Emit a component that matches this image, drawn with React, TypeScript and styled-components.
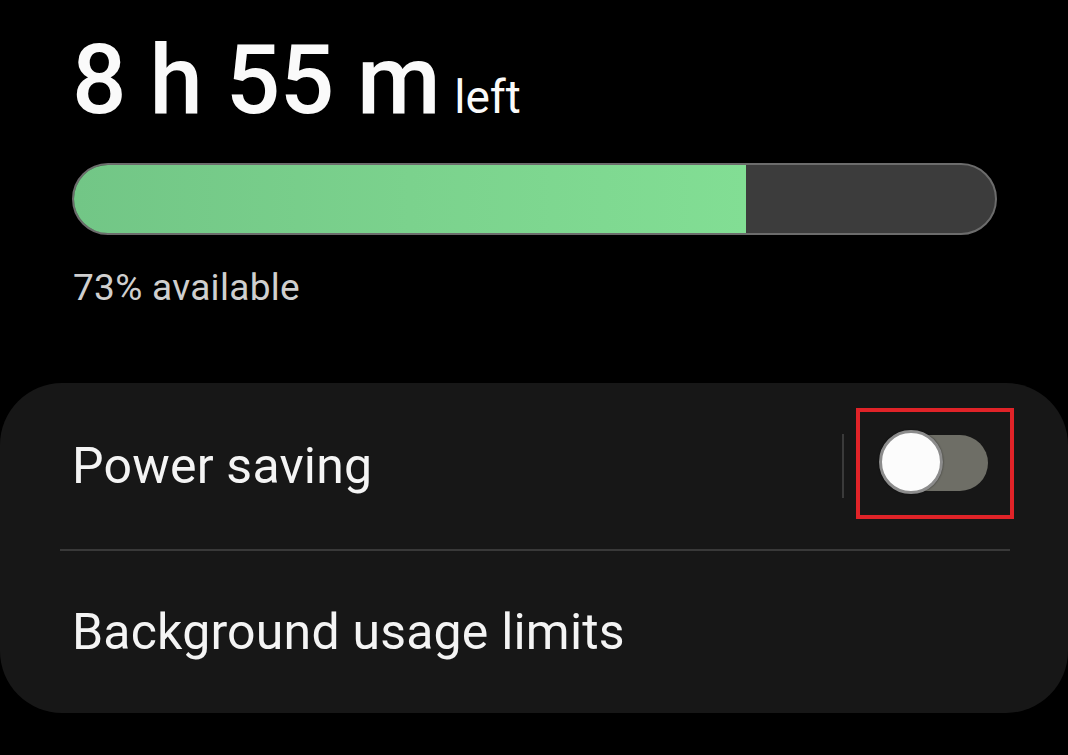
import React from "react";
import styled, { createGlobalStyle } from "styled-components";

const Global = createGlobalStyle`
  html, body { margin: 0; padding: 0; background: #000; }
  body { font-family: Roboto, "Noto Sans", sans-serif; color: #fff; overflow: hidden; }
`;

const Page = styled.div`
  width: 1068px;
  height: 755px;
  background: #000;
  display: flex;
  flex-direction: column;
`;

const Summary = styled.section`
  padding: 33px 71px 0 72px;
  display: flex;
  flex-direction: column;
`;

const Remaining = styled.h1`
  margin: 0;
  display: flex;
  align-items: baseline;
  gap: 14px;
  font-size: 96px;
  line-height: 95px;
  font-weight: 500;
  letter-spacing: -0.5px;
  color: #fafafa;
`;

const Unit = styled.span`
  font-size: 46px;
  font-weight: 400;
  letter-spacing: 0;
`;

const Bar = styled.div`
  margin-top: 18px;
  height: 72px;
  border-radius: 36px;
  border: 2px solid #6c6c6c;
  background: #3c3c3c;
  overflow: hidden;
  display: flex;
  box-sizing: border-box;
`;

const Fill = styled.div`
  height: 100%;
  background: linear-gradient(90deg, #72c686 0%, #7bd28d 50%, #82de94 100%);
`;

const Available = styled.p`
  margin: 32px 0 0 1px;
  font-size: 37px;
  line-height: 42px;
  color: #cfcfcf;
  font-weight: 400;
  letter-spacing: 0.3px;
`;

const Card = styled.section`
  margin-top: 74px;
  background: #171717;
  border-radius: 62px;
  display: flex;
  flex-direction: column;
`;

const Row = styled.div<{ $h: number }>`
  height: ${(p) => p.$h}px;
  display: flex;
  align-items: center;
  padding: 0 54px 0 72px;
`;

const Label = styled.span`
  flex: 1;
  font-size: 50px;
  font-weight: 400;
  color: #f4f4f4;
  letter-spacing: 0.2px;
`;

const VSep = styled.div`
  width: 2px;
  height: 64px;
  background: #3a3a3a;
  margin-right: 12px;
`;

const Highlight = styled.div`
  width: 158px;
  height: 111px;
  border: 4px solid #e02328;
  box-sizing: border-box;
  display: flex;
  align-items: center;
  padding-left: 19px;
  margin-top: -6px;
`;

const Switch = styled.div`
  position: relative;
  width: 110px;
  height: 66px;
`;

const Track = styled.div`
  position: absolute;
  left: 1px;
  top: 5px;
  width: 108px;
  height: 56px;
  border-radius: 28px;
  background: #6e6e66;
`;

const Thumb = styled.div`
  position: absolute;
  left: 0;
  top: 0;
  width: 64px;
  height: 64px;
  box-sizing: border-box;
  border-radius: 50%;
  background: #fcfcfc;
  border: 3px solid #8c8c8c;
  box-shadow: 0 0 2px rgba(0, 0, 0, 0.6);
`;

const Divider = styled.div`
  height: 2px;
  margin: 0 58px 0 60px;
  background: #393939;
`;

export default function App() {
  const pct = 73;
  return (
    <Page>
      <Global />
      <Summary>
        <Remaining>
          8 h 55 m<Unit>left</Unit>
        </Remaining>
        <Bar>
          <Fill style={{ width: `${pct}%` }} />
        </Bar>
        <Available>{pct}% available</Available>
      </Summary>
      <Card>
        <Row $h={166}>
          <Label>Power saving</Label>
          <VSep />
          <Highlight>
            <Switch>
              <Track />
              <Thumb />
            </Switch>
          </Highlight>
        </Row>
        <Divider />
        <Row $h={162}>
          <Label>Background usage limits</Label>
        </Row>
      </Card>
    </Page>
  );
}
